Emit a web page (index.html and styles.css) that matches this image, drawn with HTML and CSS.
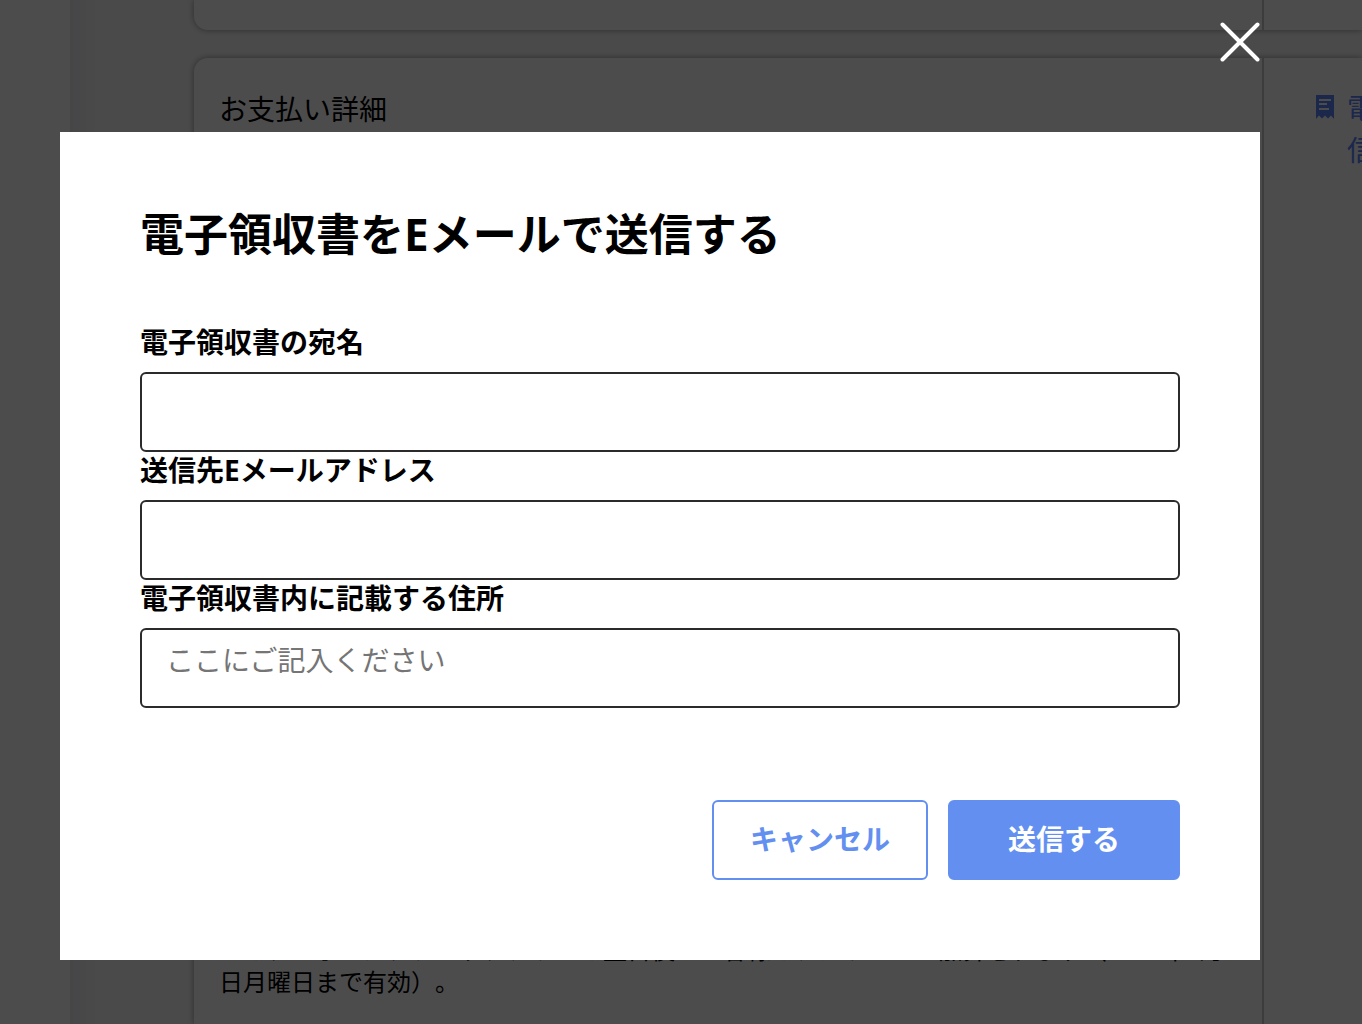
FILE: index.html
```html
<!DOCTYPE html>
<html lang="ja">
<head>
  <meta charset="utf-8">
  <meta name="viewport" content="width=device-width, initial-scale=1">
  <title>電子領収書をEメールで送信する</title>
  <link rel="stylesheet" href="styles.css">
</head>
<body>
  <div class="page" aria-hidden="true">
    <div class="page-edge"></div>
    <main class="booking">
      <section class="card card-previous">
        <div class="card-main"></div>
        <div class="card-side"></div>
      </section>
      <section class="card card-payment">
        <div class="card-main">
          <h2 class="card-title">お支払い詳細</h2>
          <p class="card-note">このクーポンは、チェックアウトの翌日後にお客様のアカウントに加算されます（2025年5月5<br>日月曜日まで有効）。</p>
        </div>
        <div class="card-side">
          <a class="receipt-link" href="#receipt" tabindex="-1">
            <svg class="receipt-icon" viewBox="0 0 20 24" width="20" height="24">
              <path fill="currentColor" fill-rule="evenodd" d="M1 0H19V24L16 20.500L13 23.500L10 20.500L7 23.500L4 20.500L1 24ZM4 4V6H16V4ZM4 8V10H12V8ZM4 13V15H14V13Z"/>
            </svg>
            <span class="receipt-text">電子領収書を送<br>信する</span>
          </a>
        </div>
      </section>
    </main>
  </div>

  <div class="overlay">
    <button class="close" type="button" aria-label="閉じる">
      <svg viewBox="0 0 40 40" width="40" height="40" fill="none" stroke="currentColor" stroke-width="4" stroke-linecap="round">
        <path d="M2.500 2.500L37.500 37.500M37.500 2.500L2.500 37.500"/>
      </svg>
    </button>
    <form class="modal" role="dialog" aria-modal="true" aria-labelledby="modal-title">
      <h1 class="modal-title" id="modal-title">電子領収書をEメールで送信する</h1>
      <label class="label" for="name">電子領収書の宛名</label>
      <input class="field" id="name" type="text">
      <label class="label" for="email">送信先Eメールアドレス</label>
      <input class="field" id="email" type="email">
      <label class="label" for="address">電子領収書内に記載する住所</label>
      <textarea class="field field-area" id="address" placeholder="ここにご記入ください"></textarea>
      <div class="actions">
        <button class="button button-secondary" type="button">キャンセル</button>
        <button class="button button-primary" type="submit">送信する</button>
      </div>
    </form>
  </div>
</body>
</html>
```
FILE: styles.css
```css
* {
  box-sizing: border-box;
}

body {
  margin: 0;
  overflow: hidden;
  color: #000;
  font-family: "Noto Sans", "Noto Sans CJK JP", sans-serif;
  font-size: 28px;
}

/* Booking page behind the dialog */
.page {
  display: flex;
  height: 100vh;
  overflow: hidden;
  background: #fff;
}

.page-edge {
  flex: 0 0 70px;
}

.booking {
  display: flex;
  flex: 1;
  flex-direction: column;
  gap: 28px;
  min-width: 0;
  padding-left: 124px;
  background: linear-gradient(to right, #ebebf0, #f8f8fa 28px);
}

.card {
  display: flex;
  background: #fff;
  box-shadow: 0 0 6px rgba(0, 0, 0, 0.4);
}

.card-previous {
  flex: 0 0 30px;
  border-bottom-left-radius: 14px;
}

.card-payment {
  flex: 1;
  border-top-left-radius: 14px;
}

.card-main {
  display: flex;
  flex: 1;
  flex-direction: column;
  justify-content: space-between;
  min-width: 0;
  padding: 30px 0 26px 25px;
}

.card-side {
  flex: 0 0 100px;
  min-width: 0;
  overflow: hidden;
  border-left: 2px solid #c8c8c8;
}

.card-previous .card-main {
  padding: 0;
}

.card-title {
  margin: 0;
  font-size: 28px;
  font-weight: 400;
  line-height: 42px;
}

.card-note {
  margin: 0;
  font-size: 24px;
  line-height: 32px;
  text-spacing-trim: space-all;
  white-space: nowrap;
}

.receipt-link {
  display: flex;
  gap: 12px;
  padding: 29px 0 0 51px;
  color: #5a85ff;
  line-height: 42px;
  text-decoration: none;
  white-space: nowrap;
}

.receipt-icon {
  flex: none;
  margin-top: 8px;
}

/* Dialog */
.overlay {
  position: fixed;
  inset: 0;
  display: flex;
  flex-direction: column;
  gap: 70px;
  padding: 22px 102px 64px 60px;
  overflow: hidden;
  background: rgba(0, 0, 0, 0.7);
}

.close {
  flex: none;
  align-self: flex-end;
  width: 40px;
  height: 40px;
  padding: 0;
  border: 0;
  background: none;
  color: #fff;
  cursor: pointer;
}

.close svg {
  display: block;
}

.modal {
  flex: none;
  padding: 74px 80px 80px;
  background: #fff;
}

.modal-title {
  margin: 0 0 62px;
  font-size: 44px;
  font-weight: 700;
  line-height: 56px;
}

.label {
  display: block;
  padding-bottom: 12px;
  font-weight: 700;
  line-height: 36px;
}

.field {
  display: block;
  width: 100%;
  height: 80px;
  padding: 10px 24px;
  border: 2px solid #2b2b2b;
  border-radius: 6px;
  background: #fff;
  color: #000;
  font: inherit;
  line-height: 40px;
}

.field-area {
  overflow: hidden;
  resize: none;
}

.field::placeholder {
  color: #757575;
}

.actions {
  display: flex;
  justify-content: flex-end;
  gap: 20px;
  margin-top: 92px;
}

.button {
  height: 80px;
  border: 2px solid #628ff0;
  border-radius: 6px;
  font: inherit;
  font-weight: 700;
  cursor: pointer;
}

.button-secondary {
  padding: 0 36px 4px;
  background: #fff;
  color: #628ff0;
}

.button-primary {
  padding: 0 58px 4px;
  background: #628ff0;
  color: #fff;
}
```
